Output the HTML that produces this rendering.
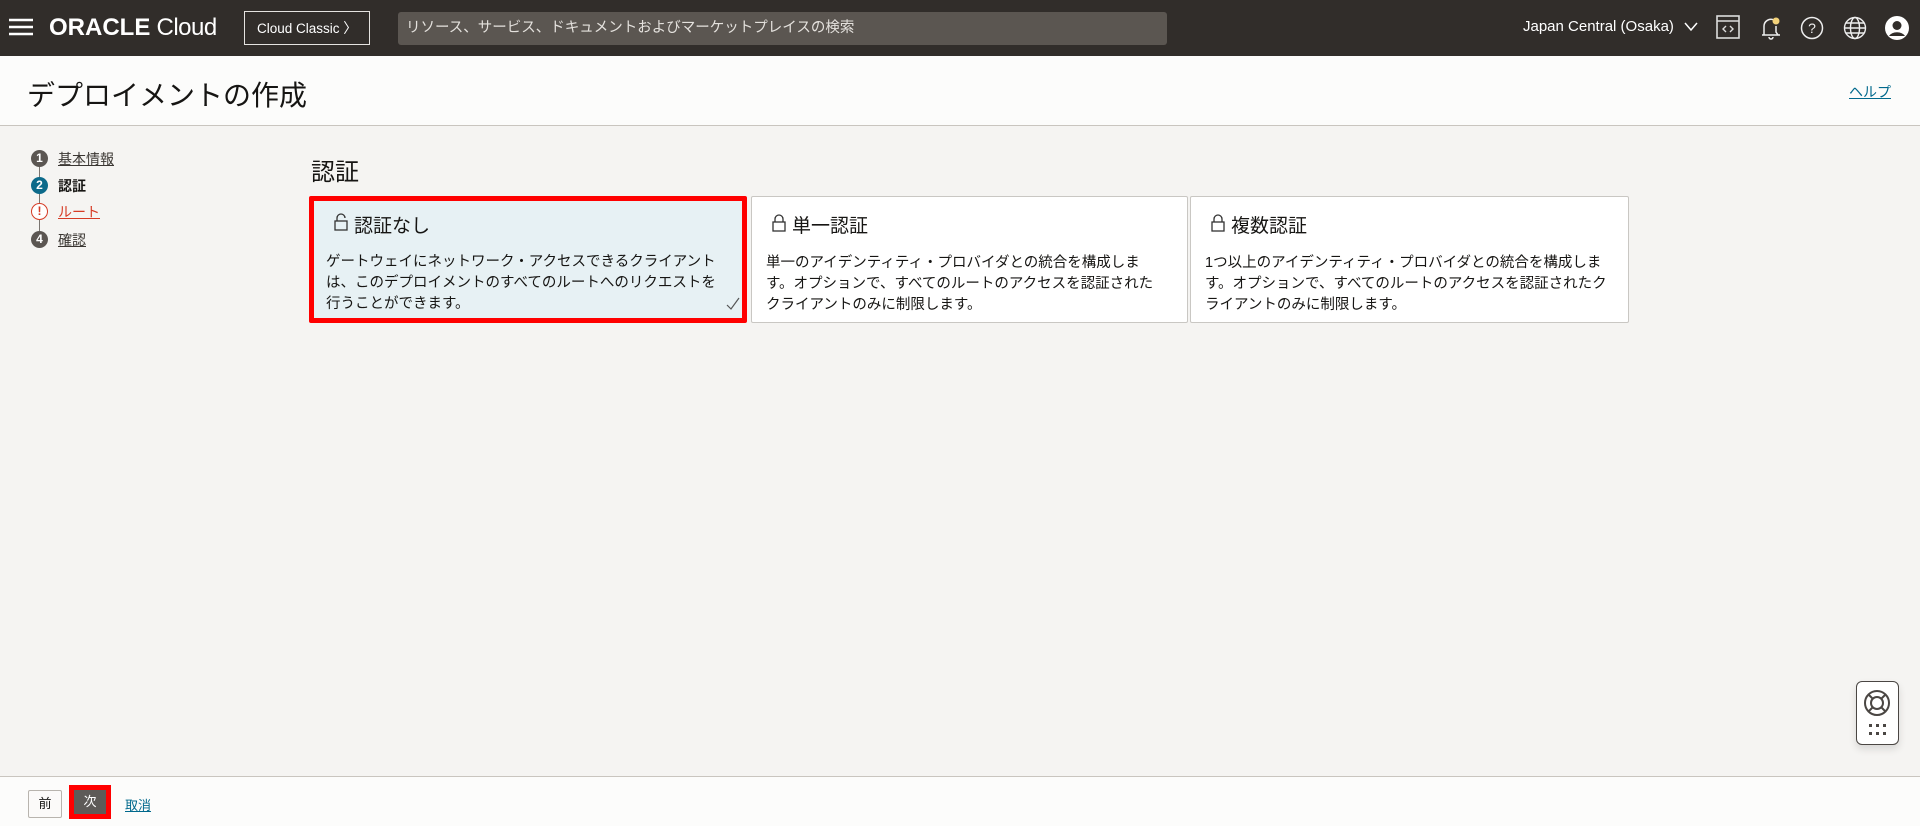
<!DOCTYPE html>
<html><head><meta charset="utf-8"><style>
*{box-sizing:border-box;margin:0;padding:0}
body{width:1920px;height:826px;overflow:hidden;background:#f5f4f2;font-family:"Liberation Sans","Noto Sans CJK JP",sans-serif;color:#161513;position:relative}
.hdr{position:absolute;left:0;top:0;width:1920px;height:56px;background:#312d2a}
.abs{position:absolute}
.card{position:absolute;top:196px;height:127px;background:#fff;border:1px solid #c9c7c3;border-radius:2px}
.card .t{position:absolute;left:44px;top:14px;font-size:19px;color:#161513}
.card .d{position:absolute;left:14px;top:56px;font-size:14.5px;line-height:21px;color:#161513;white-space:nowrap}
.lock{position:absolute;left:20px;top:17px}
.step{position:absolute;left:31px;width:17px;height:17px;border-radius:50%;background:#5b5652;color:#fff;font-size:12px;font-weight:bold;text-align:center;line-height:17px}
.sl{position:absolute;left:58px;font-size:14px}
a{color:#00688c;text-decoration:underline}
</style></head><body>
<div class="hdr">
 <svg class="abs" style="left:9px;top:18px" width="24" height="18" viewBox="0 0 24 18"><path d="M0 2h24M0 9h24M0 16h24" stroke="#fff" stroke-width="2.4"/></svg>
 <div class="abs" style="left:49px;top:14px;color:#fff;font-size:24px;letter-spacing:-0.5px;line-height:28px"><span style="font-weight:bold;letter-spacing:0">ORACLE</span> <span style="font-weight:normal">Cloud</span></div>
 <div class="abs" style="left:244px;top:11px;width:126px;height:34px;border:1px solid #e5e3e0;color:#fff;font-size:13.5px;line-height:32px;padding-left:12px">Cloud Classic <span style="font-size:14px">〉</span></div>
 <div class="abs" style="left:398px;top:12px;width:769px;height:33px;background:#5b5651;border-radius:3px;color:#e4e1dd;font-size:14.5px;line-height:33px;padding-left:8px">リソース、サービス、ドキュメントおよびマーケットプレイスの検索</div>
 <div class="abs" style="left:1523px;top:18px;color:#fff;font-size:15px">Japan Central (Osaka)</div>
 <svg class="abs" style="left:1684px;top:22px" width="14" height="10"><path d="M1 1l6 7 6-7" stroke="#fff" fill="none" stroke-width="1.5"/></svg>
 <svg class="abs" style="left:1716px;top:15px" width="24" height="24"><rect x="1" y="1" width="22" height="22" fill="none" stroke="#ddd" stroke-width="1.6"/><path d="M1 6h22" stroke="#ddd" stroke-width="1.6"/><path d="M10 11l-3 3 3 3M14 11l3 3-3 3" stroke="#ddd" fill="none" stroke-width="1.4"/></svg>
 <svg class="abs" style="left:1759px;top:14px" width="24" height="28"><path d="M5 21V12a7 7 0 0 1 10-6M5 21h14l-2-3V12M3 21h18M10 23a2 2 0 0 0 4 0" stroke="#eee" fill="none" stroke-width="1.5"/><circle cx="17" cy="7" r="3.5" fill="#f3d27a"/></svg>
 <svg class="abs" style="left:1800px;top:16px" width="24" height="24"><circle cx="12" cy="12" r="10.5" fill="none" stroke="#eee" stroke-width="1.5"/><text x="12" y="17" fill="#eee" font-size="14" text-anchor="middle" font-family="Liberation Sans">?</text></svg>
 <svg class="abs" style="left:1843px;top:16px" width="24" height="24" fill="none" stroke="#eee" stroke-width="1.4"><circle cx="12" cy="12" r="10.5"/><ellipse cx="12" cy="12" rx="4.5" ry="10.5"/><path d="M1.5 12h21M3 7h18M3 17h18"/></svg>
 <svg class="abs" style="left:1884px;top:15px" width="26" height="26"><circle cx="13" cy="13" r="12" fill="#fff"/><circle cx="13" cy="10.5" r="4.5" fill="#312d2a"/><path d="M5 21a9 7 0 0 1 16 0" fill="#312d2a"/></svg>
</div>
<div class="abs" style="left:0;top:56px;width:1920px;height:70px;background:#fcfcfb;border-bottom:1px solid #c9c5bf"></div>
<div class="abs" style="left:27px;top:74px;font-size:28px;color:#161513">デプロイメントの作成</div>
<a class="abs" style="left:1849px;top:82px;font-size:14px">ヘルプ</a>

<div class="abs" style="left:39px;top:166px;width:1px;height:70px;background:#7a7570"></div>
<div class="step" style="top:150px">1</div><a class="sl" style="top:149px;color:#3a3632">基本情報</a>
<div class="step" style="top:177px;background:#0c6a8a">2</div><div class="sl" style="top:176px;font-weight:bold">認証</div>
<div class="step" style="top:203px;background:#fff;border:1.5px solid #d63b25;color:#d63b25;line-height:14px">!</div><a class="sl" style="top:202px;color:#d63b25">ルート</a>
<div class="step" style="top:231px">4</div><a class="sl" style="top:230px;color:#3a3632">確認</a>

<div class="abs" style="left:311px;top:152px;font-size:24px">認証</div>

<div class="card" style="left:309px;width:438px;background:#e7f1f4;border:5px solid #f00">
 <svg class="lock" style="left:20px;top:12px" width="14" height="18" fill="none" stroke="#333" stroke-width="1.3"><rect x="1" y="8" width="12" height="9"/><path d="M3 8V5a4 4 0 0 1 8 0"/></svg>
 <div class="t" style="left:40px;top:10px">認証なし</div>
 <div class="d" style="left:12px;top:51px">ゲートウェイにネットワーク・アクセスできるクライアント<br>は、このデプロイメントのすべてのルートへのリクエストを<br>行うことができます。</div>
 <svg class="abs" style="left:412px;top:96px" width="14" height="14"><path d="M1 8l4 4 8-11" stroke="#555" fill="none" stroke-width="1.2"/></svg>
</div>
<div class="card" style="left:751px;width:437px">
 <svg class="lock" width="14" height="18" fill="none" stroke="#333" stroke-width="1.3"><rect x="1" y="8" width="12" height="9"/><path d="M3 8V5a4 4 0 0 1 8 0V8"/></svg>
 <div class="t" style="left:40px">単一認証</div>
 <div class="d">単一のアイデンティティ・プロバイダとの統合を構成しま<br>す。オプションで、すべてのルートのアクセスを認証された<br>クライアントのみに制限します。</div>
</div>
<div class="card" style="left:1190px;width:439px">
 <svg class="lock" width="14" height="18" fill="none" stroke="#333" stroke-width="1.3"><rect x="1" y="8" width="12" height="9"/><path d="M3 8V5a4 4 0 0 1 8 0V8"/></svg>
 <div class="t" style="left:40px">複数認証</div>
 <div class="d">1つ以上のアイデンティティ・プロバイダとの統合を構成しま<br>す。オプションで、すべてのルートのアクセスを認証されたク<br>ライアントのみに制限します。</div>
</div>

<div class="abs" style="left:1856px;top:681px;width:43px;height:64px;background:#fff;border:1.5px solid #4a4643;border-radius:6px;box-shadow:0 4px 8px rgba(0,0,0,.12)">
 <svg class="abs" style="left:6px;top:7px" width="28" height="28" fill="none" stroke="#4a4643" stroke-width="2"><circle cx="14" cy="14" r="12"/><circle cx="14" cy="14" r="6"/><path d="M6 6l4 4M22 6l-4 4M6 22l4-4M22 22l-4-4"/></svg>
 <svg class="abs" style="left:11px;top:41px" width="20" height="14" fill="#4a4643"><rect x="1" y="1" width="3" height="3"/><rect x="8" y="1" width="3" height="3"/><rect x="15" y="1" width="3" height="3"/><rect x="1" y="9" width="3" height="3"/><rect x="8" y="9" width="3" height="3"/><rect x="15" y="9" width="3" height="3"/></svg>
</div>

<div class="abs" style="left:0;top:776px;width:1920px;height:50px;background:#fcfcfb;border-top:1px solid #c9c5bf"></div>
<div class="abs" style="left:28px;top:790px;width:34px;height:28px;border:1px solid #b8b4ae;border-radius:2px;background:#fbfaf9;font-size:13px;text-align:center;line-height:26px">前</div>
<div class="abs" style="left:69px;top:785px;width:42px;height:34px;background:#f00;padding:5px"><div style="width:32px;height:24px;background:#5e5b58;color:#fff;font-size:13px;text-align:center;line-height:24px">次</div></div>
<a class="abs" style="left:125px;top:795px;font-size:13px">取消</a>
</body></html>
